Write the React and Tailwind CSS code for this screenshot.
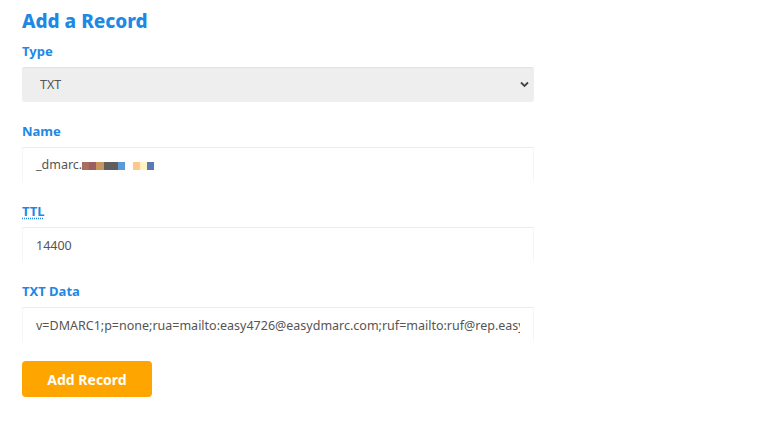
import { useState } from "react";

const labelCls =
  "block text-[13px] leading-5 font-bold text-[#1e88e5] font-['Noto_Sans',sans-serif]";
const inputCls =
  "block w-full h-[35px] px-[13px] bg-white text-[12.5px] text-[#555] border-t border-t-[#ececec] border-x border-x-[#f6f6f6] outline-none font-['Noto_Sans',sans-serif]";

// redacted domain blocks
const blocks = [
  { w: 7, c: "#a86f5e" },
  { w: 7, c: "#9c5f5f" },
  { w: 8, c: "#c99460" },
  { w: 14, c: "#5f5f5f" },
  { w: 7, c: "#5b9bd5" },
  { w: 8, c: "transparent" },
  { w: 7, c: "#ffc88a" },
  { w: 7, c: "#fff3c4" },
  { w: 7, c: "#5a7ab5" },
];

export default function App() {
  const [type, setType] = useState("TXT");
  const [ttl, setTtl] = useState("14400");
  const [data, setData] = useState(
    "v=DMARC1;p=none;rua=mailto:easy4726@easydmarc.com;ruf=mailto:ruf@rep.easydmarc.com;fo=1;"
  );

  return (
    <div className="min-h-[430px] w-full bg-white pl-[22px] pt-[7px]">
      <div className="w-[512px]">
        {/* Header */}
        <h2 className="text-[19px] leading-7 font-extrabold text-[#1e88e5] font-['Noto_Sans',sans-serif]">
          Add a Record
        </h2>

        {/* Type */}
        <label className={`${labelCls} mt-[6px] mb-[6px]`}>Type</label>
        <div className="relative">
          <select
            value={type}
            onChange={(e) => setType(e.target.value)}
            className="block w-full h-[35px] appearance-none rounded-[3px] bg-[#eeeeee] border-t border-t-[#e2e2e2] pl-[18px] text-[12.5px] text-[#555] outline-none font-['Noto_Sans',sans-serif]"
          >
            <option>A</option>
            <option>CNAME</option>
            <option>MX</option>
            <option>TXT</option>
          </select>
          <svg
            className="pointer-events-none absolute right-[5px] top-[14px] w-[9px] h-[7px]"
            viewBox="0 0 9 7"
          >
            <path d="M1 1.5 L4.5 5 L8 1.5" fill="none" stroke="#444" strokeWidth="1.8" />
          </svg>
        </div>

        {/* Name */}
        <label className={`${labelCls} mt-[19px] mb-[6px]`}>Name</label>
        <div className={`${inputCls} flex items-center`}>
          <span>_dmarc.</span>
          <span className="flex h-[8px] mt-[2px]">
            {blocks.map((b, i) => (
              <span key={i} style={{ width: b.w, background: b.c }} />
            ))}
          </span>
        </div>

        {/* TTL */}
        <label className={`${labelCls} mt-[19px] mb-[6px]`}>
          <abbr title="Time to live" className="underline decoration-dotted decoration-[#1e88e5] underline-offset-2">
            TTL
          </abbr>
        </label>
        <input
          value={ttl}
          onChange={(e) => setTtl(e.target.value)}
          className={inputCls}
        />

        {/* TXT Data */}
        <label className={`${labelCls} mt-[19px] mb-[6px]`}>TXT Data</label>
        <input
          value={data}
          onChange={(e) => setData(e.target.value)}
          className={inputCls}
        />

        <button className="mt-[19px] h-[36px] w-[130px] rounded-[4px] bg-[#ffa500] text-white text-[14px] font-bold font-['Noto_Sans',sans-serif]">
          Add Record
        </button>
      </div>
    </div>
  );
}
